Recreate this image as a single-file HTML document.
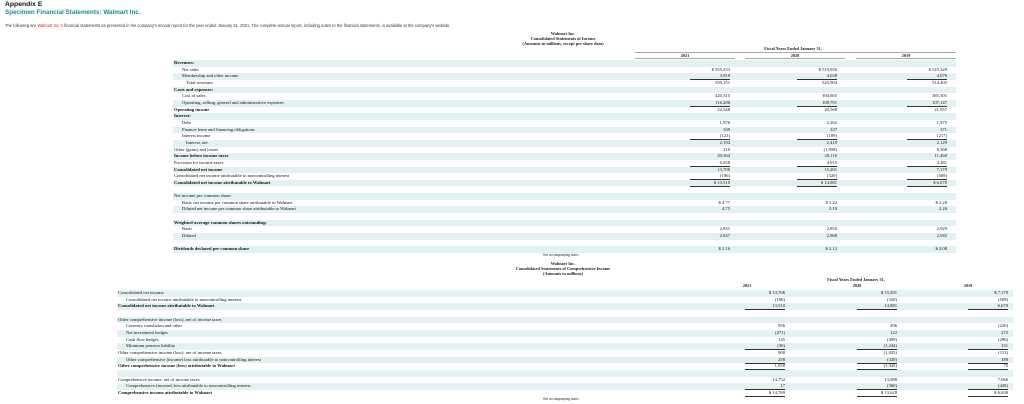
<!DOCTYPE html>
<html><head><meta charset="utf-8"><style>
*{margin:0;padding:0;box-sizing:border-box}
body{width:1024px;height:404px;background:#fff;font-family:"Liberation Sans",sans-serif;color:#222;position:relative;overflow:hidden}
.a{position:absolute;white-space:nowrap}
.t{position:absolute}
.r{height:6.67px;position:relative;font-size:4.6px;line-height:6.67px;font-family:"Liberation Serif",serif;color:#111}
.r:nth-child(odd){background:#e2f1f1}
.r .l{position:absolute;left:1px}
.r .i1{left:9px}.r .i2{left:13px}
.b{font-weight:bold}
.n{position:absolute;text-align:right;width:40px;line-height:6px}
.u{border-bottom:0.8px solid #333}
.d{border-bottom:1.6px double #333}
.c{text-align:center;font-family:"Liberation Serif",serif;font-size:4.3px;font-weight:bold}
</style></head><body>
<div class="a" style="left:5px;top:1px;font-size:6.8px;font-weight:bold;color:#111">Appendix E</div>
<div class="a" style="left:5px;top:9px;font-size:6.3px;font-weight:bold;color:#1a8a9a">Specimen Financial Statements: Walmart Inc.</div>
<div class="a" style="left:5px;top:23px;font-size:4.1px;color:#334">The following are <span style="color:#c22">Walmart Inc.'s</span> financial statements as presented in the company's annual report for the year ended January 31, 2021. The complete annual report, including notes to the financial statements, is available at the company's website.</div>

<div class="a c" style="left:463px;top:31px;width:200px;line-height:5px">Walmart Inc.<br>Consolidated Statements of Income<br>(Amounts in millions, except per share data)</div>
<div class="a c" style="left:693px;top:46px;width:200px">Fiscal Years Ended January 31,</div>
<div class="a" style="left:635px;top:52px;width:321px;border-top:0.8px solid #aaa"></div>
<div class="a c" style="left:635px;top:53px;width:100px;border-bottom:0.8px solid #aaa">2021</div>
<div class="a c" style="left:745px;top:53px;width:100px;border-bottom:0.8px solid #aaa">2020</div>
<div class="a c" style="left:856px;top:53px;width:100px;border-bottom:0.8px solid #aaa">2019</div>

<div class="t" style="left:173px;top:60px;width:783px">
<div class="r"><span class="l b">Revenues:</span></div>
<div class="r"><span class="l i1">Net sales</span><span class="n" style="left:517px">$ 555,233</span><span class="n" style="left:624px">$ 519,926</span><span class="n" style="left:734px">$ 510,329</span></div>
<div class="r"><span class="l i1">Membership and other income</span><span class="n u" style="left:517px">3,918</span><span class="n u" style="left:624px">4,038</span><span class="n u" style="left:734px">4,076</span></div>
<div class="r"><span class="l i2">Total revenues</span><span class="n" style="left:517px">559,151</span><span class="n" style="left:624px">523,964</span><span class="n" style="left:734px">514,405</span></div>
<div class="r"><span class="l b">Costs and expenses:</span></div>
<div class="r"><span class="l i1">Cost of sales</span><span class="n" style="left:517px">420,315</span><span class="n" style="left:624px">394,605</span><span class="n" style="left:734px">385,301</span></div>
<div class="r"><span class="l i1">Operating, selling, general and administrative expenses</span><span class="n u" style="left:517px">116,288</span><span class="n u" style="left:624px">108,791</span><span class="n u" style="left:734px">107,147</span></div>
<div class="r"><span class="l b">Operating income</span><span class="n" style="left:517px">22,548</span><span class="n" style="left:624px">20,568</span><span class="n" style="left:734px">21,957</span></div>
<div class="r"><span class="l b">Interest:</span></div>
<div class="r"><span class="l i1">Debt</span><span class="n" style="left:517px">1,976</span><span class="n" style="left:624px">2,262</span><span class="n" style="left:734px">1,975</span></div>
<div class="r"><span class="l i1">Finance lease and financing obligations</span><span class="n" style="left:517px">339</span><span class="n" style="left:624px">337</span><span class="n" style="left:734px">371</span></div>
<div class="r"><span class="l i1">Interest income</span><span class="n u" style="left:517px">(121)</span><span class="n u" style="left:624px">(189)</span><span class="n u" style="left:734px">(217)</span></div>
<div class="r"><span class="l i2">Interest, net</span><span class="n" style="left:517px">2,194</span><span class="n" style="left:624px">2,410</span><span class="n" style="left:734px">2,129</span></div>
<div class="r"><span class="l">Other (gains) and losses</span><span class="n u" style="left:517px">210</span><span class="n u" style="left:624px">(1,958)</span><span class="n u" style="left:734px">8,368</span></div>
<div class="r"><span class="l b">Income before income taxes</span><span class="n" style="left:517px">20,564</span><span class="n" style="left:624px">20,116</span><span class="n" style="left:734px">11,460</span></div>
<div class="r"><span class="l">Provision for income taxes</span><span class="n u" style="left:517px">6,858</span><span class="n u" style="left:624px">4,915</span><span class="n u" style="left:734px">4,281</span></div>
<div class="r"><span class="l b">Consolidated net income</span><span class="n" style="left:517px">13,706</span><span class="n" style="left:624px">15,201</span><span class="n" style="left:734px">7,179</span></div>
<div class="r"><span class="l">Consolidated net income attributable to noncontrolling interest</span><span class="n u" style="left:517px">(196)</span><span class="n u" style="left:624px">(320)</span><span class="n u" style="left:734px">(509)</span></div>
<div class="r"><span class="l b">Consolidated net income attributable to Walmart</span><span class="n d" style="left:517px">$ 13,510</span><span class="n d" style="left:624px">$ 14,881</span><span class="n d" style="left:734px">$ 6,670</span></div>
<div class="r"></div>
<div class="r"><span class="l">Net income per common share:</span></div>
<div class="r"><span class="l i1">Basic net income per common share attributable to Walmart</span><span class="n" style="left:517px">$ 4.77</span><span class="n" style="left:624px">$ 5.22</span><span class="n" style="left:734px">$ 2.28</span></div>
<div class="r"><span class="l i1">Diluted net income per common share attributable to Walmart</span><span class="n" style="left:517px">4.75</span><span class="n" style="left:624px">5.19</span><span class="n" style="left:734px">2.26</span></div>
<div class="r"></div>
<div class="r"><span class="l b">Weighted-average common shares outstanding:</span></div>
<div class="r"><span class="l i1">Basic</span><span class="n" style="left:517px">2,831</span><span class="n" style="left:624px">2,850</span><span class="n" style="left:734px">2,929</span></div>
<div class="r"><span class="l i1">Diluted</span><span class="n" style="left:517px">2,847</span><span class="n" style="left:624px">2,868</span><span class="n" style="left:734px">2,945</span></div>
<div class="r"></div>
<div class="r"><span class="l b">Dividends declared per common share</span><span class="n" style="left:517px">$ 2.16</span><span class="n" style="left:624px">$ 2.12</span><span class="n" style="left:734px">$ 2.08</span></div>
</div>

<div class="a" style="left:543px;top:253px;font-size:3.6px;font-family:'Liberation Serif',serif">See accompanying notes.</div>
<div class="a c" style="left:463px;top:261px;width:200px;line-height:5px">Walmart Inc.<br>Consolidated Statements of Comprehensive Income<br>(Amounts in millions)</div>
<div class="a c" style="left:756px;top:277px;width:200px">Fiscal Years Ended January 31,</div>
<div class="a c" style="left:697px;top:283px;width:100px">2021</div>
<div class="a c" style="left:807px;top:283px;width:100px">2020</div>
<div class="a c" style="left:918px;top:283px;width:100px">2019</div>

<div class="t" style="left:117px;top:290px;width:896px">
<div class="r"><span class="l">Consolidated net income</span><span class="n" style="left:628px">$ 13,706</span><span class="n" style="left:740px">$ 15,201</span><span class="n" style="left:851px">$ 7,179</span></div>
<div class="r"><span class="l i1">Consolidated net income attributable to noncontrolling interest</span><span class="n u" style="left:628px">(196)</span><span class="n u" style="left:740px">(320)</span><span class="n u" style="left:851px">(509)</span></div>
<div class="r"><span class="l b">Consolidated net income attributable to Walmart</span><span class="n u" style="left:628px">13,510</span><span class="n u" style="left:740px">14,881</span><span class="n u" style="left:851px">6,670</span></div>
<div class="r"></div>
<div class="r"><span class="l">Other comprehensive income (loss), net of income taxes</span></div>
<div class="r"><span class="l i1">Currency translation and other</span><span class="n" style="left:628px">956</span><span class="n" style="left:740px">496</span><span class="n" style="left:851px">(226)</span></div>
<div class="r"><span class="l i1">Net investment hedges</span><span class="n" style="left:628px">(271)</span><span class="n" style="left:740px">122</span><span class="n" style="left:851px">272</span></div>
<div class="r"><span class="l i1">Cash flow hedges</span><span class="n" style="left:628px">145</span><span class="n" style="left:740px">(399)</span><span class="n" style="left:851px">(290)</span></div>
<div class="r"><span class="l i1">Minimum pension liability</span><span class="n u" style="left:628px">(30)</span><span class="n u" style="left:740px">(1,244)</span><span class="n u" style="left:851px">131</span></div>
<div class="r"><span class="l">Other comprehensive income (loss), net of income taxes</span><span class="n" style="left:628px">800</span><span class="n" style="left:740px">(1,025)</span><span class="n" style="left:851px">(113)</span></div>
<div class="r"><span class="l i1">Other comprehensive (income) loss attributable to noncontrolling interest</span><span class="n u" style="left:628px">258</span><span class="n u" style="left:740px">(320)</span><span class="n u" style="left:851px">188</span></div>
<div class="r"><span class="l b">Other comprehensive income (loss) attributable to Walmart</span><span class="n u" style="left:628px">1,058</span><span class="n u" style="left:740px">(1,345)</span><span class="n u" style="left:851px">75</span></div>
<div class="r"></div>
<div class="r"><span class="l">Comprehensive income, net of income taxes</span><span class="n" style="left:628px">14,752</span><span class="n" style="left:740px">13,988</span><span class="n" style="left:851px">7,066</span></div>
<div class="r"><span class="l i1">Comprehensive (income) loss attributable to noncontrolling interest</span><span class="n u" style="left:628px">17</span><span class="n u" style="left:740px">(360)</span><span class="n u" style="left:851px">(428)</span></div>
<div class="r"><span class="l b">Comprehensive income attributable to Walmart</span><span class="n d" style="left:628px">$ 14,769</span><span class="n d" style="left:740px">$ 13,628</span><span class="n d" style="left:851px">$ 6,638</span></div>
</div>
<div class="a" style="left:543px;top:397px;font-size:3.6px;font-family:'Liberation Serif',serif">See accompanying notes.</div>
</body></html>
